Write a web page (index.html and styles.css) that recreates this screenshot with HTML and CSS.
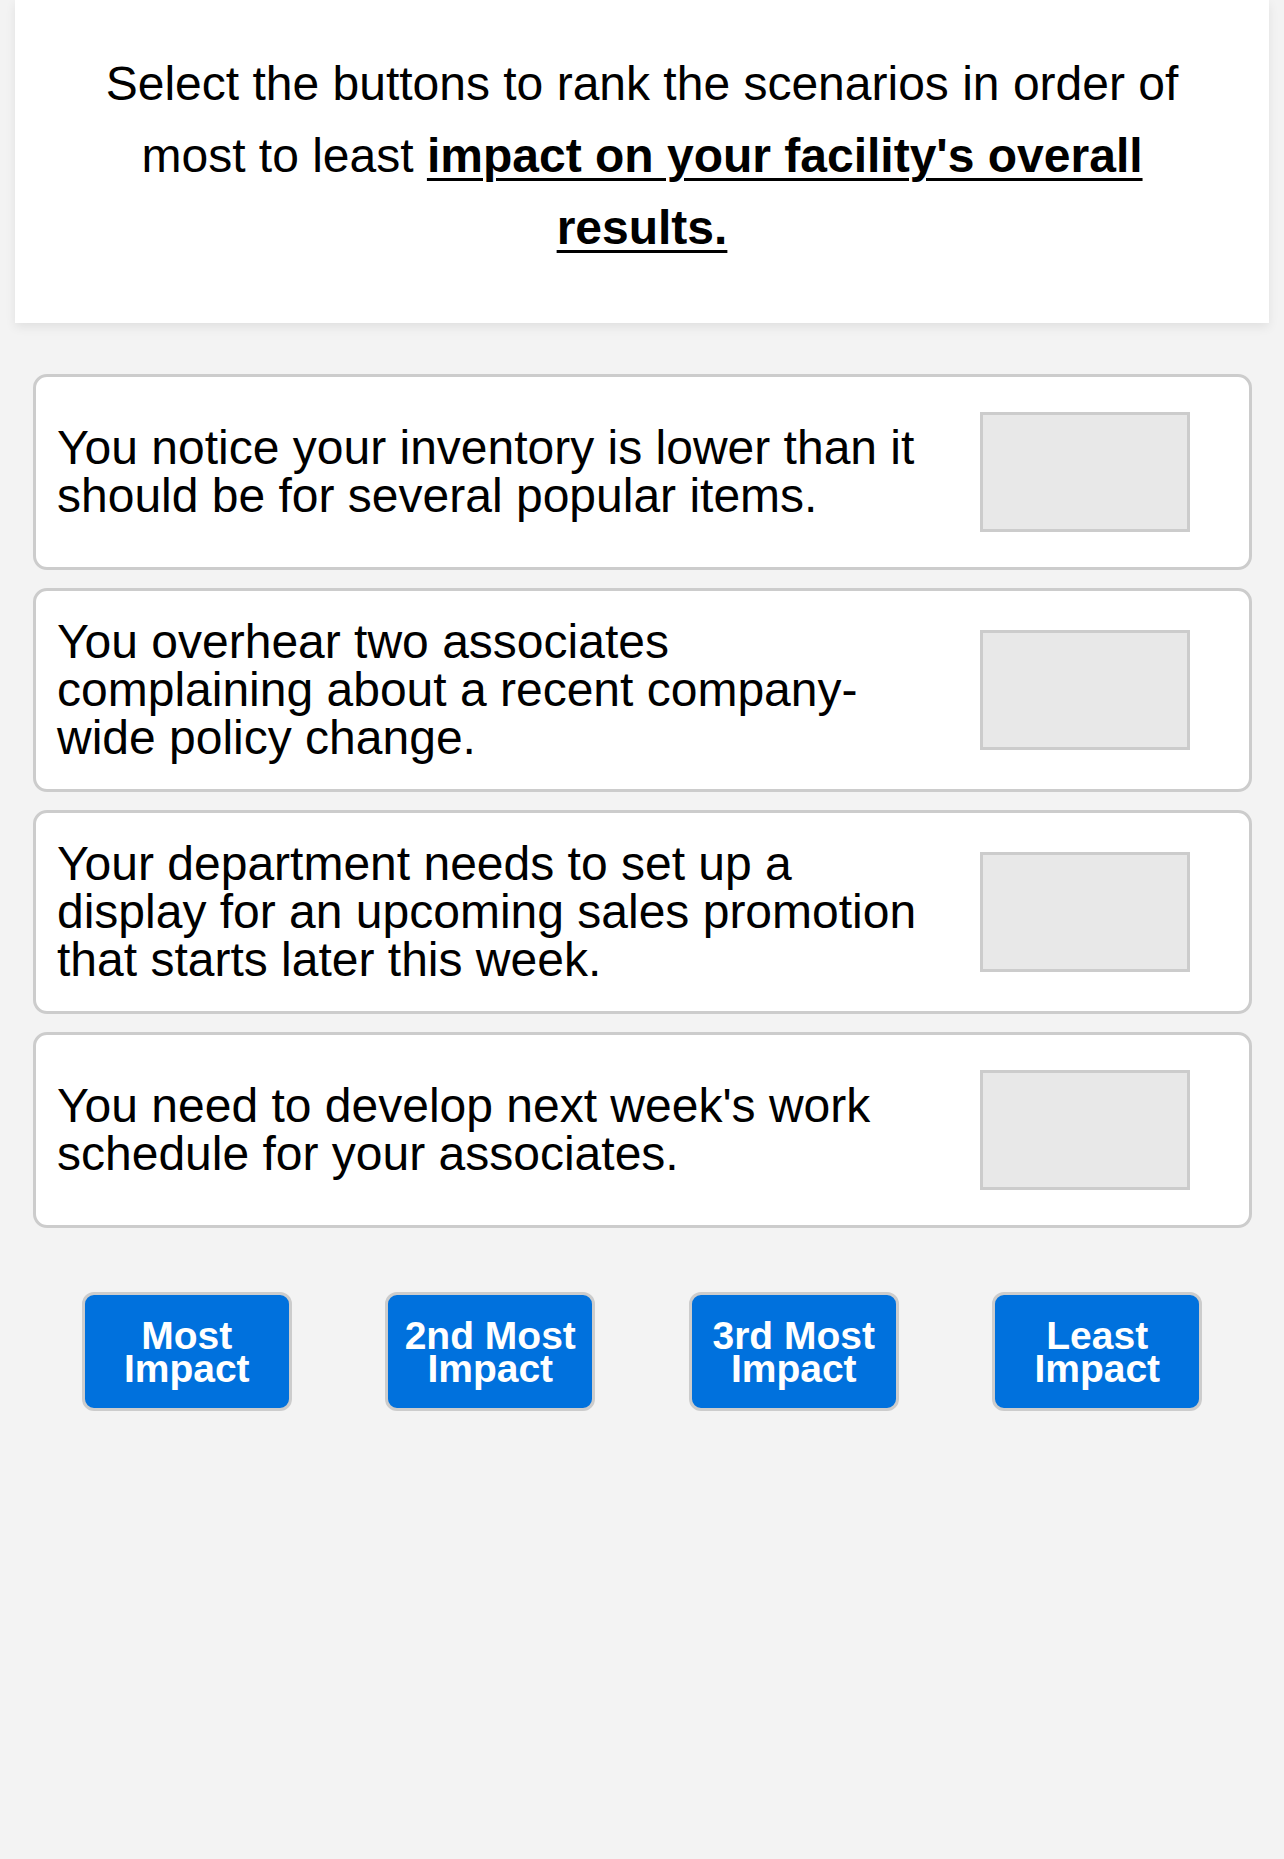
FILE: index.html
```html
<!DOCTYPE html>
<html lang="en">
<head>
  <meta charset="UTF-8" />
  <meta name="viewport" content="width=device-width, initial-scale=1.0" />
  <title>Rank the Scenarios</title>
  <link rel="stylesheet" href="styles.css">
</head>
<body>
  <div class="prompt">
    <p>Select the buttons to rank the scenarios in order of most to least <strong>impact on your facility's overall results.</strong></p>
  </div>

  <div class="scenarios">
    <div class="scenario">
      <p>You notice your inventory is lower than it should be for several popular items.</p>
      <div class="slot"><span class="rank-box"></span></div>
    </div>
    <div class="scenario">
      <p>You overhear two associates complaining about a recent company-wide policy change.</p>
      <div class="slot"><span class="rank-box"></span></div>
    </div>
    <div class="scenario">
      <p>Your department needs to set up a display for an upcoming sales promotion that starts later this week.</p>
      <div class="slot"><span class="rank-box"></span></div>
    </div>
    <div class="scenario">
      <p>You need to develop next week's work schedule for your associates.</p>
      <div class="slot"><span class="rank-box"></span></div>
    </div>
  </div>

  <div class="rank-buttons">
    <button class="rank-btn">Most<br>Impact</button>
    <button class="rank-btn">2nd Most<br>Impact</button>
    <button class="rank-btn">3rd Most<br>Impact</button>
    <button class="rank-btn">Least<br>Impact</button>
  </div>
</body>
</html>
```

FILE: styles.css
```css
body { margin: 0; background: #f3f3f3; color: #000; font-family: "Liberation Sans", Arial, sans-serif; }

.prompt { margin: 0 15px; padding: 48px 60px 59px; background: #fff; box-shadow: 0 4px 10px rgba(0,0,0,0.08); }
.prompt p { margin: 0; font-size: 48px; line-height: 72px; text-align: center; }
.prompt strong { text-decoration: underline; text-underline-offset: 6px; text-decoration-thickness: 3px; }

.scenarios { margin: 51px 32px 0 33px; display: flex; flex-direction: column; gap: 18px; }
.scenario { display: grid; grid-template-columns: 1fr 281px; column-gap: 16px; align-items: center; padding: 27px 24px 27px 21px; background: #fff; border: 3px solid #ccc; border-radius: 14px; }
.scenario p { margin: 0; font-size: 48px; line-height: 48px; }
.slot { display: flex; justify-content: center; }
.rank-box { display: block; width: 210px; height: 120px; margin: 8px 0; box-sizing: border-box; background: #e8e8e8; border: 3px solid #ccc; }

.rank-buttons { margin: 64px 35px 0; display: grid; grid-template-columns: repeat(4, 1fr); justify-items: center; }
.rank-btn { width: 210px; height: 119px; padding: 0; background: #0071dd; color: #fff; border: 3px solid #ccc; border-radius: 12px; font-family: "Liberation Sans", Arial, sans-serif; font-weight: bold; font-size: 39px; line-height: 33px; }
```
